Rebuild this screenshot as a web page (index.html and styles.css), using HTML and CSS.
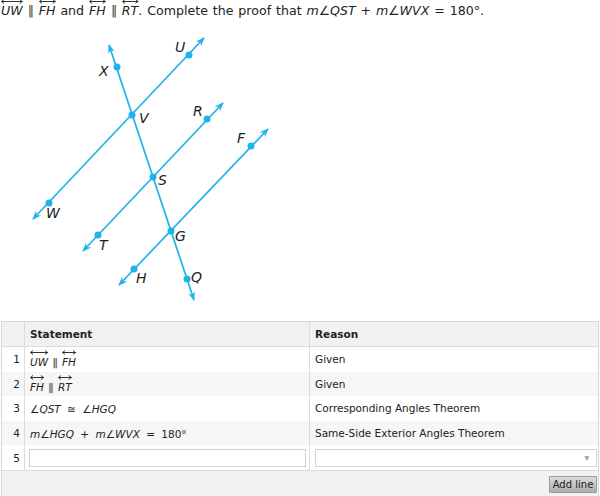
FILE: index.html
```html
<!DOCTYPE html>
<html>
<head>
<meta charset="utf-8">
<link rel="stylesheet" href="styles.css">
</head>
<body>
<div class="prompt">
  <i class="ov">UW<svg class="arr"><line x1="0.5" y1="2.5" x2="100%" y2="2.5"/><path d="M3,0.5 L0.5,2.5 L3,4.5"/><svg x="100%" overflow="visible"><path d="M-3,0.5 L-0.5,2.5 L-3,4.5"/></svg></svg></i> <span class="bar">∥</span> <i class="ov">FH<svg class="arr"><line x1="0.5" y1="2.5" x2="100%" y2="2.5"/><path d="M3,0.5 L0.5,2.5 L3,4.5"/><svg x="100%" overflow="visible"><path d="M-3,0.5 L-0.5,2.5 L-3,4.5"/></svg></svg></i> and <i class="ov">FH<svg class="arr"><line x1="0.5" y1="2.5" x2="100%" y2="2.5"/><path d="M3,0.5 L0.5,2.5 L3,4.5"/><svg x="100%" overflow="visible"><path d="M-3,0.5 L-0.5,2.5 L-3,4.5"/></svg></svg></i> <span class="bar">∥</span> <i class="ov">RT<svg class="arr"><line x1="0.5" y1="2.5" x2="100%" y2="2.5"/><path d="M3,0.5 L0.5,2.5 L3,4.5"/><svg x="100%" overflow="visible"><path d="M-3,0.5 L-0.5,2.5 L-3,4.5"/></svg></svg></i>. Complete the proof that <i>m∠QST</i> + <i>m∠WVX</i> = 180°.
</div>

<svg class="diagram" width="300" height="300" viewBox="0 20 300 300">
  <defs>
    <marker id="ah" viewBox="0 0 10 10" refX="9" refY="5" markerWidth="9" markerHeight="9" markerUnits="userSpaceOnUse" orient="auto-start-reverse">
      <path d="M0,1 L10,5 L0,9 L3,5 Z" fill="#1fb3ea"/>
    </marker>
  </defs>
  <g stroke="#1fb3ea" stroke-width="1.7" fill="none" marker-start="url(#ah)" marker-end="url(#ah)">
    <line x1="109" y1="45" x2="194" y2="300"/>
    <line x1="204" y1="38" x2="33" y2="219"/>
    <line x1="223" y1="103" x2="83" y2="251"/>
    <line x1="268" y1="129" x2="119" y2="285"/>
  </g>
  <g fill="#1fb3ea">
    <circle cx="117" cy="67" r="3.5"/>
    <circle cx="189" cy="55" r="3.5"/>
    <circle cx="132" cy="115" r="3.5"/>
    <circle cx="207" cy="119" r="3.5"/>
    <circle cx="251" cy="146" r="3.5"/>
    <circle cx="153" cy="177" r="3.5"/>
    <circle cx="49" cy="203" r="3.5"/>
    <circle cx="98" cy="235" r="3.5"/>
    <circle cx="171" cy="231" r="3.5"/>
    <circle cx="134" cy="269" r="3.5"/>
    <circle cx="187" cy="279" r="3.5"/>
  </g>
  <g class="lbl">
    <text x="175" y="52">U</text>
    <text x="99" y="76">X</text>
    <text x="139" y="123">V</text>
    <text x="193" y="116">R</text>
    <text x="237" y="143">F</text>
    <text x="158" y="185">S</text>
    <text x="46" y="218">W</text>
    <text x="99" y="250">T</text>
    <text x="175" y="241">G</text>
    <text x="136" y="283">H</text>
    <text x="191" y="282">Q</text>
  </g>
</svg>

<div class="proof">
  <div class="row head">
    <div class="num"></div>
    <div class="cell"><span>Statement</span></div>
    <div class="cell"><span>Reason</span></div>
  </div>
  <div class="row">
    <div class="num">1</div>
    <div class="cell stmt"><span><i class="ov">UW<svg class="arr"><line x1="0.5" y1="2.5" x2="100%" y2="2.5"/><path d="M3,0.5 L0.5,2.5 L3,4.5"/><svg x="100%" overflow="visible"><path d="M-3,0.5 L-0.5,2.5 L-3,4.5"/></svg></svg></i> <span class="par">∥</span> <i class="ov">FH<svg class="arr"><line x1="0.5" y1="2.5" x2="100%" y2="2.5"/><path d="M3,0.5 L0.5,2.5 L3,4.5"/><svg x="100%" overflow="visible"><path d="M-3,0.5 L-0.5,2.5 L-3,4.5"/></svg></svg></i></span></div>
    <div class="cell"><span>Given</span></div>
  </div>
  <div class="row alt">
    <div class="num">2</div>
    <div class="cell stmt"><span><i class="ov">FH<svg class="arr"><line x1="0.5" y1="2.5" x2="100%" y2="2.5"/><path d="M3,0.5 L0.5,2.5 L3,4.5"/><svg x="100%" overflow="visible"><path d="M-3,0.5 L-0.5,2.5 L-3,4.5"/></svg></svg></i> <span class="par">∥</span> <i class="ov">RT<svg class="arr"><line x1="0.5" y1="2.5" x2="100%" y2="2.5"/><path d="M3,0.5 L0.5,2.5 L3,4.5"/><svg x="100%" overflow="visible"><path d="M-3,0.5 L-0.5,2.5 L-3,4.5"/></svg></svg></i></span></div>
    <div class="cell"><span>Given</span></div>
  </div>
  <div class="row">
    <div class="num">3</div>
    <div class="cell stmt"><span class="math"><i>∠QST</i> ≅ <i>∠HGQ</i></span></div>
    <div class="cell"><span>Corresponding Angles Theorem</span></div>
  </div>
  <div class="row alt">
    <div class="num">4</div>
    <div class="cell stmt"><span class="math"><i>m∠HGQ</i> + <i>m∠WVX</i> = 180°</span></div>
    <div class="cell"><span>Same-Side Exterior Angles Theorem</span></div>
  </div>
  <div class="row">
    <div class="num">5</div>
    <div class="cell input-cell"><div class="textbox"></div></div>
    <div class="cell select-cell"><div class="selectbox"><span class="caret">▼</span></div></div>
  </div>
  <div class="foot">
    <button class="addbtn">Add line</button>
  </div>
</div>
</body>
</html>
```

FILE: styles.css
```css
html, body {
  margin: 0;
  padding: 0;
  background: #fff;
}
body {
  font-family: "DejaVu Sans", Verdana, sans-serif;
  color: #222;
  width: 600px;
  height: 496px;
  overflow: hidden;
}
.prompt {
  font-size: 12.6px;
  line-height: 15px;
  height: 20px;
  padding-left: 1px;
  white-space: nowrap;
  word-spacing: 0.9px;
}
.bar {
  color: #333;
  font-weight: normal;
}
.ov {
  position: relative;
  display: inline-block;
  padding-top: 4px;
  line-height: 14px;
  word-spacing: 0;
}
.ov .arr {
  position: absolute;
  left: 0;
  top: -1px;
  width: 100%;
  height: 5px;
  overflow: visible;
}
.arr line, .arr path {
  stroke: #333;
  stroke-width: 1;
  fill: none;
}
.diagram {
  display: block;
}
.lbl text {
  font-family: "DejaVu Sans", Verdana, sans-serif;
  font-style: italic;
  font-size: 14px;
  fill: #222;
}
.proof {
  margin: 1px 1px 0 1px;
  border: 1px solid #d6d6d6;
  font-size: 10.5px;
  color: #222;
}
.row {
  display: grid;
  grid-template-columns: 22px 285px 1fr;
  height: 24.6px;
  align-items: stretch;
}
.row.alt {
  background: #f6f6f6;
}
.row.head {
  height: 24px;
  background: #f1f1f1;
  border-bottom: 1px solid #dcdcdc;
  font-weight: bold;
}
.num {
  display: flex;
  align-items: center;
  justify-content: flex-end;
  padding-right: 4px;
}
.cell {
  box-sizing: border-box;
  display: flex;
  align-items: center;
  border-left: 1px solid #dcdcdc;
  padding-left: 5px;
  white-space: nowrap;
}
.stmt {
  padding-top: 1px;
}
.math {
  word-spacing: 3px;
}
.stmt .ov {
  padding-top: 6px;
  line-height: 13px;
}
.stmt .ov .arr {
  top: 0;
}
.par {
  font-weight: bold;
  color: #666;
  padding: 0 1px;
}
.input-cell {
  padding: 0 3px 0 4px;
}
.textbox {
  flex: 1;
  height: 16px;
  border: 1px solid #cfcfcf;
  background: #fff;
}
.select-cell {
  padding: 0 1px 0 5px;
}
.selectbox {
  flex: 1;
  height: 16px;
  border: 1px solid #d4d4d4;
  background: #fff;
  display: flex;
  justify-content: flex-end;
  align-items: center;
}
.caret {
  font-size: 6px;
  color: #999;
  padding-right: 7px;
}
.foot {
  background: #f2f2f2;
  border-top: 1px solid #dcdcdc;
  height: 25px;
  display: flex;
  justify-content: flex-end;
  align-items: center;
  padding-right: 1px;
}
.addbtn {
  font-family: "DejaVu Sans", Verdana, sans-serif;
  font-size: 10px;
  color: #222;
  height: 17px;
  width: 48px;
  padding: 0;
  border: 1px solid #9a9a9a;
  border-radius: 1px;
  background: linear-gradient(#dcdcdc, #adadad);
  margin-top: 2px;
}
```
